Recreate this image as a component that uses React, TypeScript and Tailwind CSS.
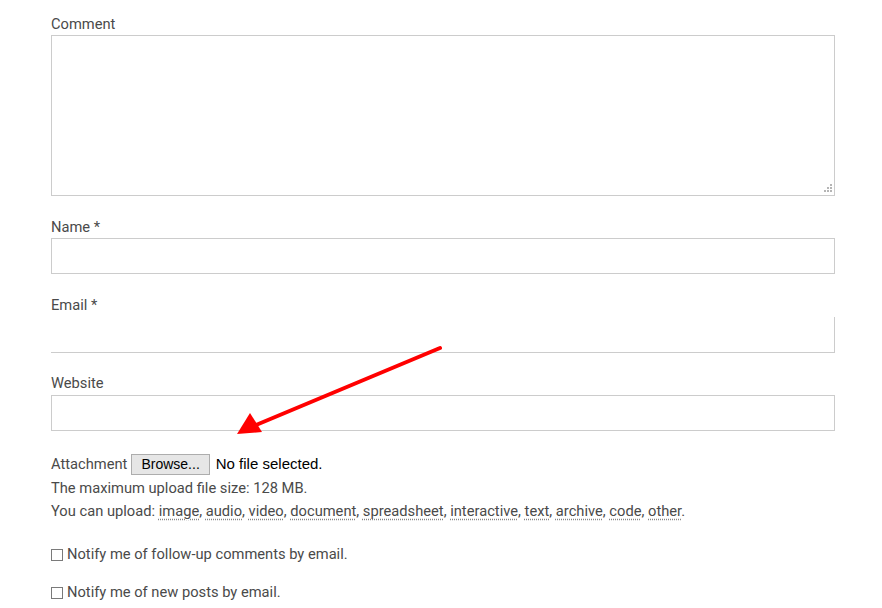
import React from 'react';

const types = ['image', 'audio', 'video', 'document', 'spreadsheet', 'interactive', 'text', 'archive', 'code', 'other'];

function Field({ label, top, gap, email }: { label: string; top: string; gap: string; email?: boolean }) {
    return (
        <div className={top}>
            <label className="block h-5 leading-5">{label}</label>
            <div
                className={`${gap} h-9 w-full ${email ? 'border-r border-b' : 'border'} border-[#cccccc] bg-white`}
            />
        </div>
    );
}

function Check({ label, top }: { label: string; top: string }) {
    return (
        <label className={`flex items-center h-5 ${top}`}>
            <span className="w-3 h-3 border border-[#7a7a7a] bg-white mr-1 mt-[2px]" />
            <span>{label}</span>
        </label>
    );
}

export default function App() {
    return (
        <div className="relative w-[882px] h-[608px] bg-white overflow-hidden font-['Roboto',sans-serif] text-[14.7px] text-[#4a4a4a]">
            <div className="pl-[51px] pt-[14px] w-[835px]">
                <label className="block h-5 leading-5">Comment</label>
                <div className="relative mt-[1px] h-[161px] w-full border border-[#cccccc]">
                    <svg className="absolute right-[1px] bottom-[2px]" width="9" height="9" viewBox="0 0 9 9">
                        <g fill="#b5b5b5">
                            <rect x="6" y="0" width="2" height="2" />
                            <rect x="3" y="3" width="2" height="2" />
                            <rect x="6" y="3" width="2" height="2" />
                            <rect x="0" y="6" width="2" height="2" />
                            <rect x="3" y="6" width="2" height="2" />
                            <rect x="6" y="6" width="2" height="2" />
                        </g>
                    </svg>
                </div>

                <Field label="Name *" top="mt-[21px]" gap="mt-[1px]" />
                <Field label="Email *" top="mt-[21px]" gap="mt-[2px]" email />
                <Field label="Website" top="mt-[20px]" gap="mt-[2px]" />

                <div className="mt-[22px] flex items-center h-[22px]">
                    <span>Attachment</span>
                    <span className="ml-[4px] h-[21px] px-[9px] flex items-center border border-[#adadad] bg-[#e6e6e6] text-black font-['Liberation_Sans',sans-serif] text-[14px]">
                        Browse...
                    </span>
                    <span className="ml-[6px] text-black font-['Liberation_Sans',sans-serif] text-[15px]">No file selected.</span>
                </div>
                <p className="mt-[2px] leading-[23px]">The maximum upload file size: 128 MB.</p>
                <p className="leading-[23px]">
                    You can upload:{' '}
                    {types.map((t, i) => (
                        <React.Fragment key={t}>
                            <span className="underline decoration-dotted decoration-[#888] underline-offset-[3px]">{t}</span>
                            {i < types.length - 1 ? ', ' : '.'}
                        </React.Fragment>
                    ))}
                </p>

                <Check label="Notify me of follow-up comments by email." top="mt-[21px]" />
                <Check label="Notify me of new posts by email." top="mt-[18px]" />
            </div>

            <svg className="absolute left-0 top-0 pointer-events-none" width="882" height="608">
                <line x1="440" y1="348" x2="256" y2="425" stroke="#ff0000" strokeWidth="4" strokeLinecap="round" />
                <polygon points="237,434 250,413 262,432" fill="#ff0000" />
            </svg>
        </div>
    );
}
